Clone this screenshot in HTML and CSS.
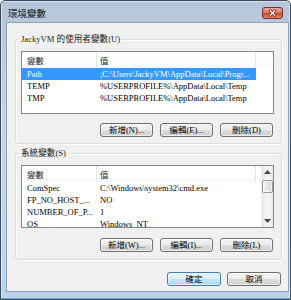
FILE: index.html
```html
<!DOCTYPE html>
<html lang="zh-Hant">
<head>
<meta charset="utf-8">
<title>環境變數</title>
<link rel="stylesheet" href="styles.css">
</head>
<body>
<div class="window">
  <div class="titlebar">
    <span class="title">環境變數</span>
    <svg class="close" width="21" height="12" viewBox="0 0 21 12">
      <defs>
        <linearGradient id="cg" x1="0" y1="0" x2="0" y2="1">
          <stop offset="0" stop-color="#eab0a3"/>
          <stop offset="0.45" stop-color="#d77c68"/>
          <stop offset="0.5" stop-color="#c4452c"/>
          <stop offset="1" stop-color="#dc8e70"/>
        </linearGradient>
      </defs>
      <rect x="0.5" y="0.5" width="20" height="11" rx="2.5" fill="url(#cg)" stroke="#74302a"/>
      <path d="M8.2 3.6 L12.8 8.4 M12.8 3.6 L8.2 8.4" stroke="#5a2118" stroke-width="2.6" stroke-linecap="round"/>
      <path d="M8.2 3.6 L12.8 8.4 M12.8 3.6 L8.2 8.4" stroke="#ffffff" stroke-width="1.3" stroke-linecap="round"/>
    </svg>
  </div>
  <div class="frame">
    <div class="content">
      <fieldset class="group group-user">
        <legend>JackyVM 的使用者變數(U)</legend>
        <div class="list">
          <div class="list-main">
            <div class="header">
              <div class="hcell">變數</div>
              <div class="hcell hval">值</div>
              <div class="hcell hrest"></div>
            </div>
            <div class="row sel"><span class="c1">Path</span><span class="c2">;C:\Users\JackyVM\AppData\Local\Progr...</span></div>
            <div class="row"><span class="c1">TEMP</span><span class="c2">%USERPROFILE%\AppData\Local\Temp</span></div>
            <div class="row"><span class="c1">TMP</span><span class="c2">%USERPROFILE%\AppData\Local\Temp</span></div>
          </div>
        </div>
        <div class="btnrow">
          <button class="btn">新增(N)...</button>
          <button class="btn">編輯(E)...</button>
          <button class="btn">刪除(D)</button>
        </div>
      </fieldset>
      <fieldset class="group group-sys">
        <legend>系統變數(S)</legend>
        <div class="list">
          <div class="list-main">
            <div class="header">
              <div class="hcell">變數</div>
              <div class="hcell hval">值</div>
              <div class="hcell hrest"></div>
            </div>
            <div class="row"><span class="c1">ComSpec</span><span class="c2">C:\Windows\system32\cmd.exe</span></div>
            <div class="row"><span class="c1">FP_NO_HOST_...</span><span class="c2">NO</span></div>
            <div class="row"><span class="c1">NUMBER_OF_P...</span><span class="c2">1</span></div>
            <div class="row"><span class="c1">OS</span><span class="c2">Windows_NT</span></div>
          </div>
          <div class="scrollbar">
            <div class="arrow">
              <svg width="7" height="4" viewBox="0 0 7 4"><path d="M0 4 L3.5 0 L7 4 Z" fill="#4a4a4a"/></svg>
            </div>
            <div class="track"><div class="thumb"></div></div>
            <div class="arrow">
              <svg width="7" height="4" viewBox="0 0 7 4"><path d="M0 0 L3.5 4 L7 0 Z" fill="#4a4a4a"/></svg>
            </div>
          </div>
        </div>
        <div class="btnrow btnrow-sys">
          <button class="btn">新增(W)...</button>
          <button class="btn">編輯(I)...</button>
          <button class="btn">刪除(L)</button>
        </div>
      </fieldset>
      <div class="dlgrow">
        <button class="btn btn-wide btn-default">確定</button>
        <button class="btn btn-wide">取消</button>
      </div>
    </div>
  </div>
</div>
</body>
</html>
```
FILE: styles.css
```css
* { box-sizing: border-box; }

body {
  margin: 0;
  width: 291px;
  height: 300px;
  overflow: hidden;
  background: #ffffff;
  font-family: "Liberation Serif", "Noto Sans CJK TC", serif;
  font-size: 8.5px;
  color: #000;
}

.window {
  width: 291px;
  height: 300px;
  border: 1px solid #3d4d5f;
  border-radius: 5px 5px 0 0;
  background: linear-gradient(to bottom, #b5c6d9 0%, #c2d2e4 30%, #c4d6ea 70%, #b9d3ec 100%);
  box-shadow: inset 0 0 0 1px rgba(255, 255, 255, 0.45);
  display: flex;
  flex-direction: column;
}

.titlebar {
  height: 21px;
  flex: none;
  display: flex;
  align-items: flex-start;
  padding: 0 7px 0 7px;
}

.title {
  font-family: "Noto Sans CJK TC", sans-serif;
  font-size: 9.5px;
  line-height: 12px;
  margin-top: 6px;
  color: #111;
}

.close {
  margin-left: auto;
  margin-top: 6px;
  display: block;
}

.frame {
  flex: 1;
  display: flex;
  padding: 0 5px 6px 5px;
  border-bottom: 1px solid #6aa9cf;
}

.content {
  flex: 1;
  background: #f0f0f0;
  border: 1px solid #8fa3b8;
  display: flex;
  flex-direction: column;
  padding: 0 6px 0 8px;
}

.group {
  margin: 0;
  padding: 6px 7px 6px 5px;
  min-width: 0;
  border: 1px solid #d5dfe5;
  border-radius: 3px;
  box-shadow: inset 1px 1px 0 #ffffff, 1px 1px 0 #ffffff;
}

.group-user { margin-top: 10px; }
.group-sys { margin-top: 3px; padding-bottom: 7px; }

.group legend {
  font-family: "Liberation Serif", "Noto Sans CJK TC", serif;
  font-size: 8.6px;
  line-height: 12px;
  padding: 0 2px;
  margin-left: -2px;
  color: #1a1a1a;
}

.list {
  height: 63px;
  border: 1px solid #828790;
  background: #ffffff;
  display: flex;
  overflow: hidden;
}

.list-main {
  flex: 1;
  min-width: 0;
  display: flex;
  flex-direction: column;
}

.header {
  display: grid;
  grid-template-columns: 75px 159px 1fr;
  height: 16px;
  flex: none;
  background: linear-gradient(to bottom, #ffffff 0%, #ffffff 60%, #f6f7f9 100%);
}

.hcell {
  font-family: "Noto Sans CJK TC", sans-serif;
  font-size: 8.5px;
  line-height: 16px;
  padding-left: 5px;
  border-right: 1px solid #e3e5e8;
  color: #1e1e1e;
}

.hval { padding-left: 3px; }
.hrest { border-right: none; }

.row {
  width: 234px;
  height: 12px;
  flex: none;
  display: grid;
  grid-template-columns: 75px 159px;
  line-height: 12px;
  white-space: nowrap;
}

.row .c1,
.row .c2 {
  overflow: hidden;
}

.row .c1 { padding-left: 5px; }
.row .c2 { padding-left: 3px; }

.row.sel {
  background: #3399ff;
  color: #ffffff;
}

.scrollbar {
  width: 12px;
  flex: none;
  display: flex;
  flex-direction: column;
  background: linear-gradient(to right, #e6e6e6 0%, #f4f4f4 30%, #f4f4f4 70%, #e9e9e9 100%);
  border-left: 1px solid #f0f0f0;
}

.arrow {
  height: 12px;
  flex: none;
  display: flex;
  align-items: center;
  justify-content: center;
}

.arrow svg { display: block; }

.track {
  flex: 1;
  display: flex;
  flex-direction: column;
}

.thumb {
  margin: 2px 0 0 0;
  height: 13px;
  border: 1px solid #979797;
  border-radius: 2px;
  background: linear-gradient(to right, #f3f3f3 0%, #e8e8e8 50%, #d6d6d6 100%);
  box-shadow: inset 0 0 0 1px rgba(255, 255, 255, 0.7);
}

.btnrow {
  display: flex;
  justify-content: flex-end;
  gap: 7px;
  margin-top: 9px;
  margin-right: 1px;
}

.btnrow-sys { margin-top: 10px; }

.btn {
  width: 53px;
  height: 14px;
  padding: 0;
  margin: 0;
  border: 1px solid #707070;
  border-radius: 3px;
  background: linear-gradient(to bottom, #f2f2f2 0%, #ebebeb 50%, #dddddd 51%, #cfcfcf 100%);
  box-shadow: inset 0 0 0 1px rgba(255, 255, 255, 0.6);
  font-family: "Liberation Serif", "Noto Sans CJK TC", serif;
  font-size: 8.5px;
  line-height: 12px;
  color: #000;
}

.btn-wide { width: 54px; }

.btn-default {
  border-color: #3c7fb1;
  background: linear-gradient(to bottom, #eaf6fd 0%, #d9f0fc 50%, #bee6fd 51%, #a7d9f5 100%);
}

.dlgrow {
  display: flex;
  justify-content: flex-end;
  gap: 6px;
  margin-top: 12px;
  margin-right: 1px;
}
```
